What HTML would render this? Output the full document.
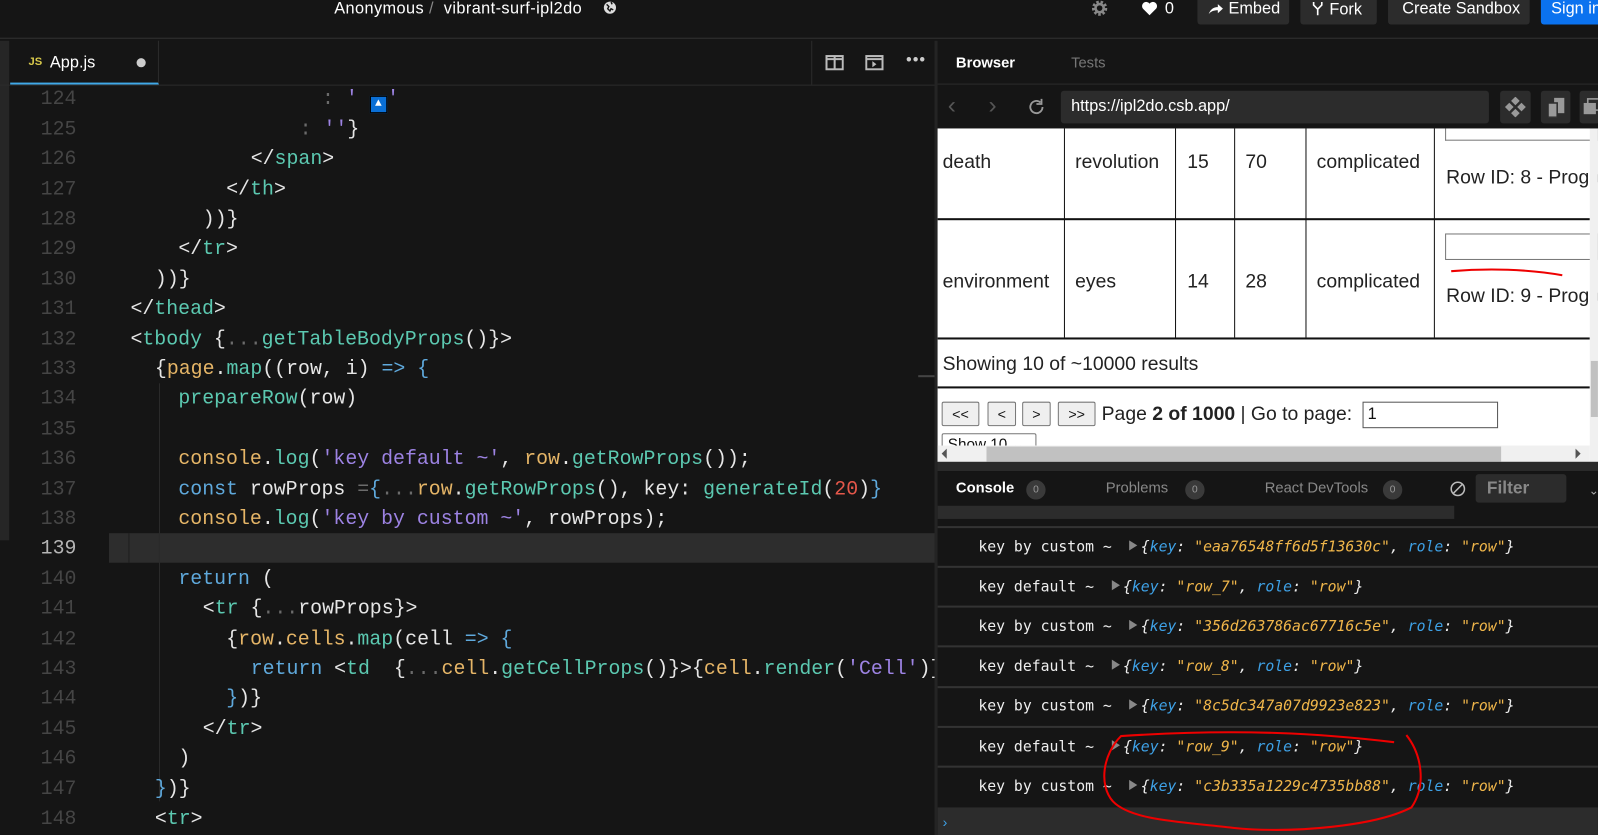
<!DOCTYPE html>
<html><head><meta charset="utf-8"><style>
*{margin:0;padding:0;box-sizing:border-box}
html,body{width:1598px;height:835px;overflow:hidden;background:#151515}
#w{position:absolute;left:0;top:0;width:1568px;height:819px;transform:scale(1.0191,1.0195);transform-origin:0 0;background:#151515;font-family:"Liberation Sans",sans-serif;color:#fff}
.a{position:absolute;white-space:pre}
.code{font-family:"Liberation Mono",monospace;font-size:19.5px;color:#e6e6e6;line-height:29.4px;margin-top:2px}
.ln{position:absolute;left:30px;width:45px;text-align:right;color:#454545;font-family:"Liberation Mono",monospace;font-size:19.5px;line-height:29.4px;margin-top:2px}
.t{color:#5cc9b1}.o{color:#e5b567}.p{color:#9d83e3}.b{color:#5fa9dc}.r{color:#e4574a}.d{color:#6b6b6b}
.btn{position:absolute;top:0;height:24px;background:#2c2c2c;border-radius:0 0 3px 3px;font-size:16px;line-height:18px;padding-left:10px}
.wt{position:absolute;font-size:19px;color:#222;white-space:pre}
.vl{position:absolute;width:1px;background:#111}
.hl{position:absolute;height:1.5px;background:#111}
.pb{position:absolute;top:268px;height:24px;border:1px solid #777;background:#efefef;border-radius:2px;font-size:14px;color:#111;text-align:center;line-height:22px}
.cl{position:absolute;left:0;right:0;height:1.5px;background:#333}
.cm{position:absolute;font-family:"DejaVu Sans Mono","Liberation Mono",monospace;font-size:14.5px;color:#eee;white-space:pre}
.cm i{font-style:italic}
.k{color:#3ea1e6}.s{color:#f0b64a}
.tri{display:inline-block;width:0;height:0;border-left:8px solid #888;border-top:5px solid transparent;border-bottom:5px solid transparent;margin-right:3px;vertical-align:1px}
.badge{position:absolute;top:471px;width:19px;height:19px;border-radius:50%;background:#3a3a3a;color:#999;font-size:10px;text-align:center;line-height:19px}
</style></head><body><div id="w">
<!-- top bar -->
<div class="a" style="left:0;top:0;width:1568px;height:38px;border-bottom:1.5px solid #333"></div>
<div class="a" style="left:328px;top:0;font-size:16px;color:#fff;letter-spacing:0.4px">Anonymous <span style="color:#888">/</span>  vibrant-surf-ipl2do</div>
<svg class="a" style="left:592px;top:1px" width="13" height="13" viewBox="0 0 12 12"><circle cx="6" cy="6" r="5.5" fill="#ddd"/><path d="M3 3l2 2-1 2 2 2 1-2 2 1M7 1l1 2" stroke="#151515" stroke-width="1.3" fill="none"/></svg>
<svg class="a" style="left:1071px;top:0" width="16" height="16" viewBox="0 0 16 16"><circle cx="8" cy="8" r="5.5" fill="none" stroke="#888" stroke-width="4" stroke-dasharray="2.2 1.6"/><circle cx="8" cy="8" r="4" fill="none" stroke="#888" stroke-width="2.5"/></svg>
<svg class="a" style="left:1120px;top:1px" width="16" height="15" viewBox="0 0 16 15"><path d="M8 14L1.5 7.5A3.7 3.7 0 0 1 8 2.5a3.7 3.7 0 0 1 6.5 5z" fill="#fff"/></svg>
<div class="a" style="left:1143px;top:0;font-size:16px">0</div>
<div class="btn" style="left:1175px;width:90px"><svg style="vertical-align:-2px" width="16" height="12" viewBox="0 0 16 12"><path d="M1 11C3 5 7 4 10 4V1l5 4.5L10 10V7C6 7 3 8 1 11z" fill="#fff"/></svg> Embed</div>
<div class="btn" style="left:1276px;width:75px"><svg style="vertical-align:-2px" width="14" height="16" viewBox="0 0 14 16"><path d="M3 2v3l4 4v6M11 2v3L7 9" stroke="#fff" stroke-width="1.6" fill="none"/></svg> Fork</div>
<div class="btn" style="left:1362px;width:139px;padding-left:14px">Create Sandbox</div>
<div class="btn" style="left:1512px;width:60px;background:#0b72ef">Sign in</div>
<!-- editor -->
<div class="a" style="left:0;top:40px;width:9px;height:490px;background:#262626"></div>
<div class="a" style="left:10px;top:40px;width:146px;height:43px;border-right:1px solid #2b2b2b;border-bottom:2px solid #40a9e8"></div>
<div class="a" style="left:28px;top:55px;font-size:11px;color:#d8c94b;font-weight:bold">JS</div>
<div class="a" style="left:49px;top:53px;font-size:16px">App.js</div>
<div class="a" style="left:134px;top:57px;width:9px;height:9px;border-radius:50%;background:#ccc"></div>
<div class="a" style="left:0;top:83px;width:918px;height:1px;background:#2b2b2b"></div>
<div class="a" style="left:796px;top:40px;width:1px;height:43px;background:#2b2b2b"></div>
<svg class="a" style="left:810px;top:54px" width="18" height="15"><rect x="1" y="1" width="16" height="13" fill="none" stroke="#bbb" stroke-width="2"/><path d="M9 1v13M1 4h16" stroke="#bbb" stroke-width="2"/></svg>
<svg class="a" style="left:849px;top:54px" width="18" height="15"><rect x="1" y="1" width="16" height="13" fill="none" stroke="#bbb" stroke-width="2"/><path d="M1 4h16" stroke="#bbb" stroke-width="2"/><path d="M7 6l4 3-4 3z" fill="#bbb"/></svg>
<div class="a" style="left:889px;top:51px;font-size:16px;color:#ccc;letter-spacing:1px">•••</div>
<div class="a" style="left:107px;top:523px;width:810px;height:29px;background:#2d2d2d"></div>
<div class="a" style="left:126px;top:523px;width:1px;height:29px;background:#1e1e1e"></div>
<div class="a" style="left:156px;top:376px;width:1px;height:410px;background:#2a2a2a"></div>
<div class="a" style="left:901px;top:368px;width:16px;height:2px;background:#444"></div>
<div class="a" style="left:917px;top:40px;width:3px;height:779px;background:#242424"></div>
<div class="ln" style="top:81px">124</div><div class="ln" style="top:111px">125</div><div class="ln" style="top:140px">126</div><div class="ln" style="top:170px">127</div><div class="ln" style="top:199px">128</div><div class="ln" style="top:228px">129</div><div class="ln" style="top:258px">130</div><div class="ln" style="top:287px">131</div><div class="ln" style="top:317px">132</div><div class="ln" style="top:346px">133</div><div class="ln" style="top:375px">134</div><div class="ln" style="top:405px">135</div><div class="ln" style="top:434px">136</div><div class="ln" style="top:464px">137</div><div class="ln" style="top:493px">138</div><div class="ln" style="top:522px;color:#b5b5b5">139</div><div class="ln" style="top:552px">140</div><div class="ln" style="top:581px">141</div><div class="ln" style="top:611px">142</div><div class="ln" style="top:640px">143</div><div class="ln" style="top:669px">144</div><div class="ln" style="top:699px">145</div><div class="ln" style="top:728px">146</div><div class="ln" style="top:758px">147</div><div class="ln" style="top:787px">148</div>
<div class="a code" style="left:316px;top:81px"><span class="d">:</span> <span class="p">'</span> <span style="display:inline-block;width:17px;height:17px;background:#0a6fd6;border:1px solid #000;vertical-align:-2px;text-align:center;font-size:11px;line-height:15px;color:#fff">▲</span><span class="p">'</span></div>
<div class="a code" style="left:294px;top:111px"><span class="d">:</span> <span class="p">''</span>}</div>
<div class="a code" style="left:246px;top:140px">&lt;/<span class="t">span</span>&gt;</div>
<div class="a code" style="left:222px;top:170px">&lt;/<span class="t">th</span>&gt;</div>
<div class="a code" style="left:199px;top:199px">))}</div>
<div class="a code" style="left:175px;top:228px">&lt;/<span class="t">tr</span>&gt;</div>
<div class="a code" style="left:152px;top:258px">))}</div>
<div class="a code" style="left:128px;top:287px">&lt;/<span class="t">thead</span>&gt;</div>
<div class="a code" style="left:128px;top:317px">&lt;<span class="t">tbody</span> {<span class="d">...</span><span class="t">getTableBodyProps</span>()}&gt;</div>
<div class="a code" style="left:152px;top:346px">{<span class="o">page</span>.<span class="t">map</span>((row, i) <span class="b">=&gt; {</span></div>
<div class="a code" style="left:175px;top:375px"><span class="t">prepareRow</span>(row)</div>
<div class="a code" style="left:175px;top:434px"><span class="o">console</span>.<span class="t">log</span>(<span class="p">'key default ~'</span>, <span class="o">row</span>.<span class="t">getRowProps</span>());</div>
<div class="a code" style="left:175px;top:464px"><span class="b">const</span> rowProps <span class="d">=</span><span class="b">{</span><span class="d">...</span><span class="o">row</span>.<span class="t">getRowProps</span>(), key: <span class="t">generateId</span>(<span class="r">20</span>)<span class="b">}</span></div>
<div class="a code" style="left:175px;top:493px"><span class="o">console</span>.<span class="t">log</span>(<span class="p">'key by custom ~'</span>, rowProps);</div>
<div class="a code" style="left:175px;top:552px"><span class="b">return</span> (</div>
<div class="a code" style="left:199px;top:581px">&lt;<span class="t">tr</span> {<span class="d">...</span>rowProps}&gt;</div>
<div class="a code" style="left:222px;top:611px">{<span class="o">row</span>.<span class="o">cells</span>.<span class="t">map</span>(cell <span class="b">=&gt; {</span></div>
<div class="a code" style="left:246px;top:640px;width:671px;overflow:hidden"><span class="b">return</span> &lt;<span class="t">td</span>  {<span class="d">...</span><span class="o">cell</span>.<span class="t">getCellProps</span>()}&gt;{<span class="o">cell</span>.<span class="t">render</span>(<span class="p">'Cell'</span>)}</div>
<div class="a code" style="left:222px;top:669px"><span class="b">}</span>)}</div>
<div class="a code" style="left:199px;top:699px">&lt;/<span class="t">tr</span>&gt;</div>
<div class="a code" style="left:175px;top:728px">)</div>
<div class="a code" style="left:152px;top:758px"><span class="b">}</span>)}</div>
<div class="a code" style="left:152px;top:787px">&lt;<span class="t">tr</span>&gt;</div>
<!-- right panel -->
<div class="a" style="left:920px;top:40px;width:648px;height:43px;border-bottom:1px solid #2b2b2b"></div>
<div class="a" style="left:938px;top:54px;font-size:14.5px;font-weight:bold">Browser</div>
<div class="a" style="left:1051px;top:54px;font-size:14.5px;color:#777">Tests</div>
<div class="a" style="left:930px;top:90px;font-size:24px;color:#555">‹</div>
<div class="a" style="left:970px;top:90px;font-size:24px;color:#555">›</div>
<svg class="a" style="left:1008px;top:96px" width="18" height="18" viewBox="0 0 18 18"><path d="M15 9a6 6 0 1 1-2-4.5" fill="none" stroke="#999" stroke-width="1.8"/><path d="M14 1v5h-5" fill="none" stroke="#999" stroke-width="1.8"/></svg>
<div class="a" style="left:1041px;top:89px;width:420px;height:32px;background:#2c2c2c;border-radius:3px;font-size:16px;line-height:32px;padding-left:10px">https://ipl2do.csb.app/</div>
<div class="a" style="left:1472px;top:89px;width:30px;height:32px;background:#2c2c2c;border-radius:3px"></div>
<svg class="a" style="left:1476px;top:95px" width="22" height="20"><g fill="#999"><rect x="8" y="1" width="6" height="6" transform="rotate(45 11 4)"/><rect x="2" y="7" width="6" height="6" transform="rotate(45 5 10)"/><rect x="14" y="7" width="6" height="6" transform="rotate(45 17 10)"/><rect x="8" y="13" width="6" height="6" transform="rotate(45 11 16)"/></g></svg>
<div class="a" style="left:1512px;top:89px;width:29px;height:32px;background:#2c2c2c;border-radius:3px"></div>
<svg class="a" style="left:1516px;top:95px" width="22" height="20"><rect x="9" y="1" width="10" height="15" fill="#999"/><rect x="3" y="6" width="9" height="14" fill="#999" stroke="#2c2c2c" stroke-width="1.5"/></svg>
<div class="a" style="left:1550px;top:89px;width:20px;height:32px;background:#2c2c2c;border-radius:3px"></div>
<svg class="a" style="left:1553px;top:96px" width="15" height="18"><rect x="5" y="1" width="12" height="11" fill="none" stroke="#999" stroke-width="1.6"/><rect x="1" y="5" width="12" height="11" fill="#999"/></svg>
<!-- white content -->
<div class="a" style="left:920px;top:126px;width:648px;height:327px;background:#fff;overflow:hidden">
<div class="hl" style="left:0;top:88px;width:640px"></div>
<div class="hl" style="left:0;top:205px;width:640px"></div>
<div class="hl" style="left:0;top:253px;width:640px"></div>
<div class="vl" style="left:124px;top:0;height:205px"></div>
<div class="vl" style="left:233px;top:0;height:205px"></div>
<div class="vl" style="left:291px;top:0;height:205px"></div>
<div class="vl" style="left:361px;top:0;height:205px"></div>
<div class="vl" style="left:487px;top:0;height:205px"></div>
<div class="a" style="left:498px;top:-2px;width:150px;height:14px;border:1px solid #777;border-top:none"></div>
<div class="a" style="left:498px;top:103px;width:150px;height:26px;border:1px solid #777"></div>
<div class="wt" style="left:5px;top:23px">death</div><div class="wt" style="left:135px;top:23px">revolution</div><div class="wt" style="left:245px;top:23px">15</div><div class="wt" style="left:302px;top:23px">70</div><div class="wt" style="left:372px;top:23px">complicated</div><div class="wt" style="left:499px;top:38px">Row ID: 8 - Progress</div>
<div class="wt" style="left:5px;top:140px">environment</div><div class="wt" style="left:135px;top:140px">eyes</div><div class="wt" style="left:245px;top:140px">14</div><div class="wt" style="left:302px;top:140px">28</div><div class="wt" style="left:372px;top:140px">complicated</div><div class="wt" style="left:499px;top:154px">Row ID: 9 - Progress</div>
<div class="wt" style="left:5px;top:221px">Showing 10 of ~10000 results</div>
<div class="pb" style="left:4px;width:37px">&lt;&lt;</div><div class="pb" style="left:49px;width:28px">&lt;</div><div class="pb" style="left:83px;width:28px">&gt;</div><div class="pb" style="left:118px;width:37px">&gt;&gt;</div>
<div class="wt" style="left:161px;top:270px">Page <b>2 of 1000</b> | Go to page:</div>
<div class="a" style="left:417px;top:268px;width:133px;height:26px;border:1px solid #555;font-size:16px;color:#111;line-height:24px;padding-left:4px">1</div>
<div class="a" style="left:4px;top:299px;width:93px;height:24px;border:1px solid #777;border-radius:2px;font-size:15px;color:#111;padding-left:5px;line-height:22px">Show 10 ⌄</div>
<div class="a" style="left:0;top:311px;width:640px;height:16px;background:#f0f0f0"></div>
<div class="a" style="left:48px;top:312px;width:505px;height:15px;background:#c1c1c1"></div>
<div class="a" style="left:4px;top:314px;width:0;height:0;border-right:5px solid #555;border-top:5px solid transparent;border-bottom:5px solid transparent"></div>
<div class="a" style="left:626px;top:314px;width:0;height:0;border-left:5px solid #555;border-top:5px solid transparent;border-bottom:5px solid transparent"></div>
<div class="a" style="left:640px;top:0;width:8px;height:327px;background:#f0f0f0"></div>
<div class="a" style="left:641px;top:228px;width:7px;height:55px;background:#c1c1c1"></div>
</div>
<div class="a" style="left:920px;top:453px;width:648px;height:9px;background:#2a2a2a"></div>
<!-- console -->
<div class="a" style="left:938px;top:471px;font-size:14.5px;font-weight:bold">Console</div>
<div class="badge" style="left:1007px">0</div>
<div class="a" style="left:1085px;top:471px;font-size:14.5px;color:#888">Problems</div>
<div class="badge" style="left:1163px">0</div>
<div class="a" style="left:1241px;top:471px;font-size:14.5px;color:#888">React DevTools</div>
<div class="badge" style="left:1357px">0</div>
<svg class="a" style="left:1422px;top:471px" width="17" height="17"><circle cx="8.5" cy="8.5" r="6.5" fill="none" stroke="#bbb" stroke-width="1.5"/><path d="M4 13L13 4" stroke="#bbb" stroke-width="1.5"/></svg>
<div class="a" style="left:1448px;top:465px;width:89px;height:28px;background:#2c2c2c;border-radius:3px;font-size:17px;font-weight:bold;color:#888;line-height:28px;padding-left:11px">Filter</div>
<div class="a" style="left:1559px;top:474px;font-size:12px;color:#aaa">⌄</div>
<div class="a" style="left:920px;top:496px;width:648px;height:323px;overflow:hidden">
<div class="a" style="left:0;top:0;width:507px;height:13px;background:#2c2c2c"></div>
<div class="cl" style="top:20px"></div><div class="cl" style="top:59px"></div><div class="cl" style="top:98px"></div><div class="cl" style="top:137px"></div><div class="cl" style="top:177px"></div><div class="cl" style="top:216px"></div><div class="cl" style="top:255px"></div>
<div class="cm" style="left:40px;top:33px">key by custom ~  <span class="tri"></span><i>{<span class="k">key</span>: <span class="s">"eaa76548ff6d5f13630c"</span>, <span class="k">role</span>: <span class="s">"row"</span>}</i></div>
<div class="cm" style="left:40px;top:72px">key default ~  <span class="tri"></span><i>{<span class="k">key</span>: <span class="s">"row_7"</span>, <span class="k">role</span>: <span class="s">"row"</span>}</i></div>
<div class="cm" style="left:40px;top:111px">key by custom ~  <span class="tri"></span><i>{<span class="k">key</span>: <span class="s">"356d263786ac67716c5e"</span>, <span class="k">role</span>: <span class="s">"row"</span>}</i></div>
<div class="cm" style="left:40px;top:150px">key default ~  <span class="tri"></span><i>{<span class="k">key</span>: <span class="s">"row_8"</span>, <span class="k">role</span>: <span class="s">"row"</span>}</i></div>
<div class="cm" style="left:40px;top:189px">key by custom ~  <span class="tri"></span><i>{<span class="k">key</span>: <span class="s">"8c5dc347a07d9923e823"</span>, <span class="k">role</span>: <span class="s">"row"</span>}</i></div>
<div class="cm" style="left:40px;top:229px">key default ~  <span class="tri"></span><i>{<span class="k">key</span>: <span class="s">"row_9"</span>, <span class="k">role</span>: <span class="s">"row"</span>}</i></div>
<div class="cm" style="left:40px;top:268px">key by custom ~  <span class="tri"></span><i>{<span class="k">key</span>: <span class="s">"c3b335a1229c4735bb88"</span>, <span class="k">role</span>: <span class="s">"row"</span>}</i></div>
<div class="a" style="left:0;top:296px;width:648px;height:27px;background:#2c2c2c"></div>
<div class="a" style="left:5px;top:302px;font-size:14px;color:#3ea1e6">›</div>
</div>
<!-- red annotations -->
<svg class="a" style="left:0;top:0" width="1568" height="819">
<path d="M1424 266C1460 263 1500 264 1533 270" stroke="#e00" stroke-width="2" fill="none"/>
<path d="M1368 728C1300 720 1220 714 1100 722C1082 740 1078 770 1092 786C1110 805 1160 806 1210 812C1270 818 1350 810 1385 792C1400 770 1395 740 1380 721" stroke="#e00" stroke-width="2" fill="none"/>
</svg>
</div></body></html>
